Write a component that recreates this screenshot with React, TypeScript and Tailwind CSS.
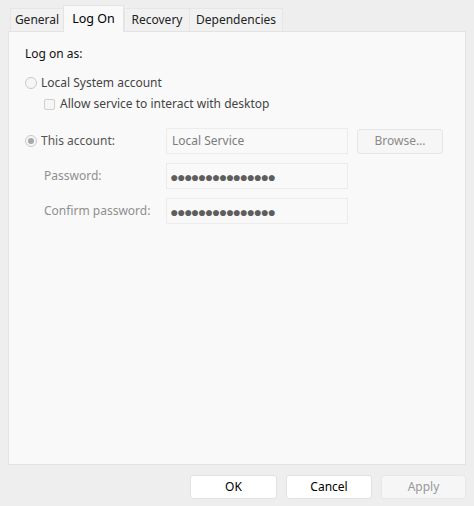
import React from "react";

const font = { fontFamily: '"Noto Sans", "Liberation Sans", sans-serif' };

function Radio({ checked }: { checked?: boolean }) {
  return (
    <span className="w-[12px] h-[12px] rounded-full border border-[#c9c9c9] bg-[#f6f6f6] flex items-center justify-center shrink-0">
      {checked && <span className="w-[6px] h-[6px] rounded-full bg-[#a8a8a8]" />}
    </span>
  );
}

function Field({ children, dots }: { children: React.ReactNode; dots?: boolean }) {
  return (
    <div
      className={`w-[182px] h-[26px] border border-[#ececec] bg-[#f9f9f9] flex items-center ${
        dots ? "pl-[3px] text-[#5e5e5e] text-[14px] tracking-[-1.5px]" : "pl-[5px] text-[#7c7c7c] text-[12px]"
      }`}
    >
      {children}
    </div>
  );
}

export default function App() {
  return (
    <div className="w-[474px] h-[506px] bg-[#eeeeee] flex flex-col text-[12px] text-[#1f1f1f]" style={font}>
      {/* Tabs */}
      <div className="flex items-end pl-[10px] h-[31px]">
        <div className="w-[54px] h-[23px] bg-[#f1f1f1] border border-b-0 border-[#e6e6e6] flex items-center justify-center text-[12px] text-[#222]">
          General
        </div>
        <div className="w-[61px] h-[27px] bg-[#f9f9f9] border border-b-0 border-[#e3e3e3] flex items-center justify-center text-[12.5px] text-black relative top-[1px] -ml-[1px] z-10">
          Log On
        </div>
        <div className="w-[66px] h-[23px] bg-[#f1f1f1] border border-b-0 border-[#e6e6e6] flex items-center justify-center text-[12px] text-[#222]">
          Recovery
        </div>
        <div className="w-[93px] h-[23px] bg-[#f1f1f1] border border-b-0 border-l-0 border-[#e6e6e6] flex items-center justify-center text-[12px] text-[#222]">
          Dependencies
        </div>
      </div>

      {/* Panel */}
      <div className="mx-[8px] h-[434px] bg-[#f9f9f9] border border-[#e3e3e3] pl-[16px] pt-[12px] flex flex-col">
        <div className="text-[12px] text-[#111] h-[20px] flex items-center">Log on as:</div>

        <div className="mt-[10px] h-[18px] flex items-center gap-[4px]">
          <Radio />
          <span className="text-[#444] text-[12px]">Local System account</span>
        </div>
        <div className="mt-[3px] h-[18px] flex items-center gap-[5px] pl-[19px]">
          <span className="w-[11px] h-[11px] border border-[#cfcfcf] bg-[#f6f6f6] rounded-[2px]" />
          <span className="text-[#444] text-[12px]">Allow service to interact with desktop</span>
        </div>

        <div className="mt-[15px] flex items-center">
          <div className="w-[141px] flex items-center gap-[4px]">
            <Radio checked />
            <span className="text-[#555] text-[12px]">This account:</span>
          </div>
          <Field>Local Service</Field>
          <div className="ml-[9px] w-[86px] h-[25px] border border-[#e6e6e6] bg-[#f6f6f6] rounded-[3px] flex items-center justify-center text-[#8a8a8a] text-[12px]">
            Browse...
          </div>
        </div>

        <div className="mt-[9px] flex items-center">
          <div className="w-[141px] pl-[19px] text-[#8f8f8f] text-[12px]">Password:</div>
          <Field dots>●●●●●●●●●●●●●●●</Field>
        </div>
        <div className="mt-[9px] flex items-center">
          <div className="w-[141px] pl-[19px] text-[#8f8f8f] text-[12px]">Confirm password:</div>
          <Field dots>●●●●●●●●●●●●●●●</Field>
        </div>
      </div>

      {/* Buttons */}
      <div className="flex justify-end gap-[9px] pr-[8px] pt-[10px]">
        <div className="w-[87px] h-[24px] bg-white border border-[#e2e2e2] rounded-[3px] flex items-center justify-center text-[12px] text-black">
          OK
        </div>
        <div className="w-[86px] h-[24px] bg-white border border-[#e2e2e2] rounded-[3px] flex items-center justify-center text-[12px] text-black">
          Cancel
        </div>
        <div className="w-[85px] h-[24px] bg-[#f6f6f6] border border-[#e8e8e8] rounded-[3px] flex items-center justify-center text-[12px] text-[#999]">
          Apply
        </div>
      </div>
    </div>
  );
}
